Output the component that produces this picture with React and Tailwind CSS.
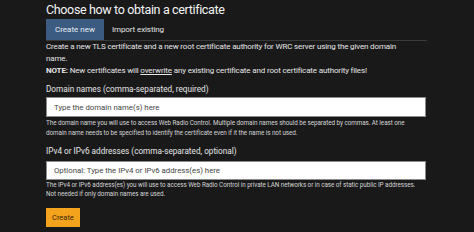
import React from "react";

const App = () => {
  return (
    <div
      className="min-h-screen w-full bg-[#19191a] text-[#e6e6e6]"
      style={{ fontFamily: "Roboto, 'Liberation Sans', sans-serif" }}
    >
      <div className="ml-[46px] w-[381px]">
        <h2 className="text-[12.5px] leading-[19px] tracking-[-0.35px] text-[#f4f4f4]">
          Choose how to obtain a certificate
        </h2>
        <div className="flex border-b border-[#3a3a3a] text-[8px]">
          <button
            type="button"
            className="h-[21px] bg-[#3b5b80] px-[9px] text-[#e8eef5]"
          >
            Create new
          </button>
          <button type="button" className="h-[21px] px-[8px] tracking-[-0.1px] text-[#e6e6e6]">
            Import existing
          </button>
        </div>
        <p className="text-[8px] leading-[12px] tracking-[-0.15px]">
          Create a new TLS certificate and a new root certificate authority for
          WRC server using the given domain
          <br />
          name.
        </p>
        <p className="text-[8px] leading-[12px] tracking-[-0.15px]">
          <strong className="font-bold">NOTE:</strong> New certificates will{" "}
          <u>overwrite</u> any existing certificate and root certificate
          authority files!
        </p>

        <label className="mt-[6px] block text-[8.2px] leading-[12px]">
          Domain names (comma-separated, required)
        </label>
        <input
          type="text"
          placeholder="Type the domain name(s) here"
          className="mt-[2px] block h-[20px] w-[380px] border border-[#8a8a8a] bg-white px-[7px] text-[7.8px] text-black placeholder:text-[#444]"
        />
        <p className="mt-[1px] text-[6.3px] leading-[10px] tracking-[-0.05px] text-[#d4d4d4]">
          The domain name you will use to access Web Radio Control. Multiple
          domain names should be separated by commas. At least one
          <br />
          domain name needs to be specified to identify the certificate even if
          it the name is not used.
        </p>

        <label className="mt-[7px] block text-[8.2px] leading-[12px]">
          IPv4 or IPv6 addresses (comma-separated, optional)
        </label>
        <input
          type="text"
          placeholder="Optional: Type the IPv4 or IPv6 address(es) here"
          className="mt-[4px] block h-[19px] w-[380px] border border-[#8a8a8a] bg-white px-[7px] text-[7.8px] text-black placeholder:text-[#444]"
        />
        <p className="mt-[1px] whitespace-nowrap text-[6.3px] leading-[9px] tracking-[-0.05px] text-[#d4d4d4]">
          The IPv4 or IPv6 address(es) you will use to access Web Radio Control
          in private LAN networks or in case of static public IP addresses.
          <br />
          Not needed if only domain names are used.
        </p>

        <button
          type="button"
          className="mt-[9px] h-[19px] bg-[#f4a41c] px-[6px] text-[7.5px] text-[#3a2a0a]"
        >
          Create
        </button>
      </div>
    </div>
  );
};

export default App;
